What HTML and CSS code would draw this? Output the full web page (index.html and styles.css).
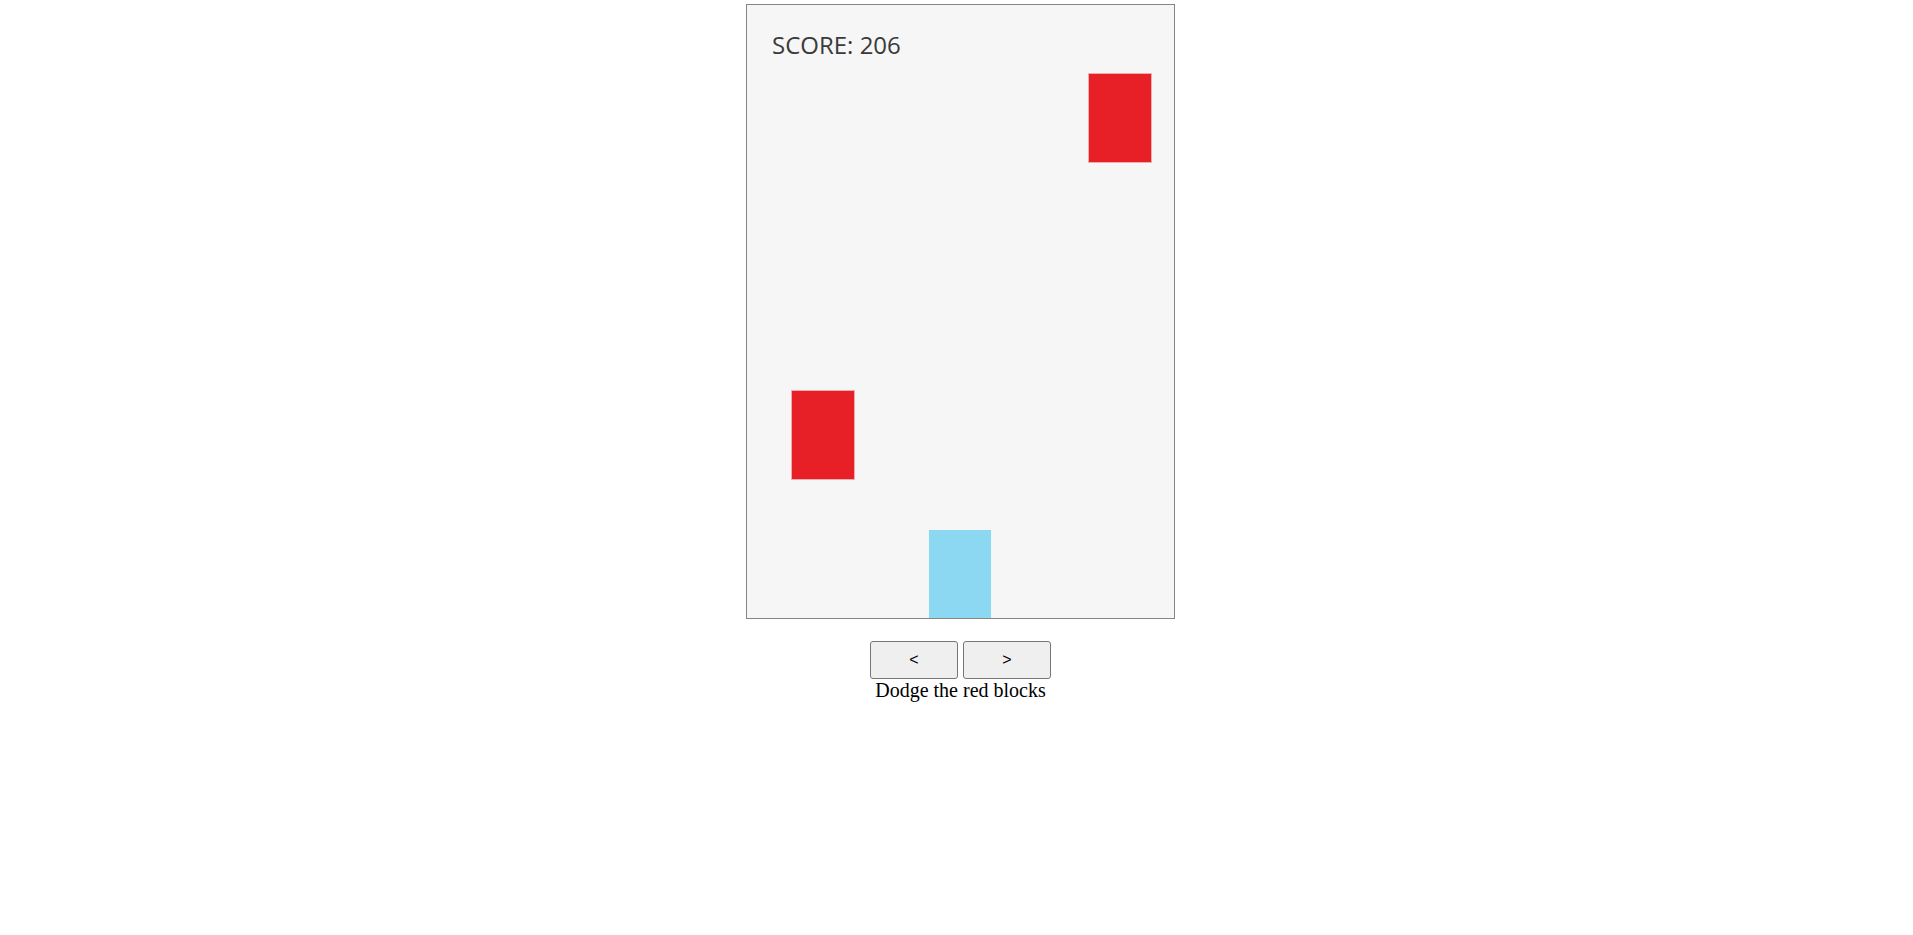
FILE: index.html
```html
<!DOCTYPE html>
<html lang="en">
<head>
    <meta charset="UTF-8">
    <meta name="viewport" content="width=device-width, initial-scale=1.0">
    <title>Dodge</title>
    <link rel="stylesheet" href="styles.css">
</head>
<body>
    <div class="game">
        <div class="board" id="board">
            <div class="score">SCORE: <span id="score">206</span></div>
            <div class="block enemy" style="left: 342px; top: 69px;"></div>
            <div class="block enemy" style="left: 45px; top: 386px;"></div>
            <div class="block player" id="player" style="left: 182px;"></div>
        </div>

        <div class="ctrl">
            <button id="btnL">&lt;</button>
            <button id="btnR">&gt;</button>
        </div>
        <p class="hint">Dodge the red blocks</p>
    </div>
</body>
</html>
```

FILE: styles.css
```css
* {
    margin: 0;
    padding: 0;
    box-sizing: border-box;
}
body {
    margin: 4px 0 0 8px;
    background: #fff;
    font-family: "Liberation Serif", "Times New Roman", serif;
}
.game {
    display: flex;
    flex-direction: column;
    align-items: center;
}
.board {
    position: relative;
    width: 429px;
    height: 615px;
    background: #f6f6f6;
    border: 1px solid #858585;
    overflow: hidden;
}
.score {
    position: absolute;
    left: 25px;
    top: 25px;
    font-family: "Open Sans", "Noto Sans", sans-serif;
    font-size: 24px;
    line-height: 30px;
    color: #3a3a3a;
}
.block {
    position: absolute;
    width: 62px;
    height: 88px;
}
.enemy {
    background: #e71f27;
    box-shadow: 0 0 0 1px rgba(231, 31, 39, 0.35);
}
.player {
    bottom: 0;
    background: #8cd8f2;
}
.ctrl {
    display: flex;
    gap: 5px;
    margin-top: 22px;
}
.ctrl button {
    width: 88px;
    height: 38px;
    font-family: "Liberation Sans", Arial, sans-serif;
    font-size: 16px;
    color: #000;
    background: #efefef;
    border: 1px solid #767676;
    border-radius: 3px;
}
.hint {
    font-size: 20px;
    line-height: 23px;
    color: #000;
}
```
